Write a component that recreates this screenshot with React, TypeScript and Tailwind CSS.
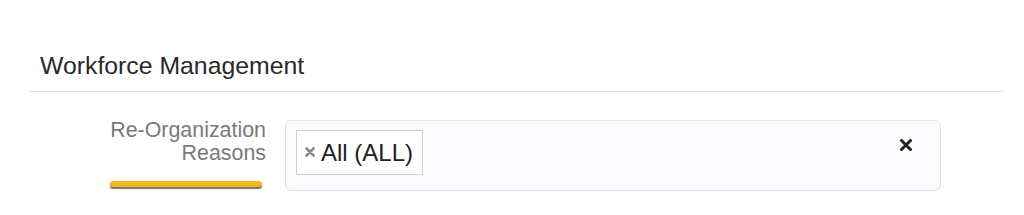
import React from "react";

export default function App() {
  return (
    <div className="w-[1024px] h-[215px] bg-white overflow-hidden" style={{ fontFamily: '"Liberation Sans", Arial, sans-serif' }}>
      <div className="ml-[30px] mr-[20px] border-b border-[#dedede] pl-[10px] pt-[52px] pb-[11px]">
        <h2 className="text-[24.8px] leading-[28px] text-[#2a2a2a] font-normal">Workforce Management</h2>
      </div>
      <div className="flex mt-[27px] ml-[30px]">
        <div className="w-[236px] flex flex-col items-end">
          <div className="text-right text-[21.4px] leading-[23px] text-[#7a7a7a]">
            Re-Organization
            <br />
            Reasons
          </div>
          <div className="mt-[16px] mr-[4px] w-[152px] h-[6px] rounded-full bg-[#f2b81c] shadow-[0_2px_1px_rgba(60,60,60,0.7)]" />
        </div>
        <div className="ml-[19px] w-[656px] h-[71px] mt-[1px] rounded-[6px] border border-[#e4e4e8] bg-[#fbfbfd] flex items-start pl-[10px] pt-[9px] pr-[28px]">
          <div className="h-[45px] border border-[#cfcfcf] bg-white flex items-center pl-[8px] pr-[9px]">
            <svg width="10" height="10" viewBox="0 0 10 10" className="mr-[6px] mt-[-2px]">
              <path d="M1.5 1.5 L8.5 8.5 M8.5 1.5 L1.5 8.5" stroke="#888" strokeWidth="2.6" strokeLinecap="round" />
            </svg>
            <span className="text-[24px] leading-[28px] text-[#222]">All (ALL)</span>
          </div>
          <div className="flex-1" />
          <svg width="12" height="12" viewBox="0 0 12 12" className="mt-[9px]">
            <path d="M1.5 1.5 L10.5 10.5 M10.5 1.5 L1.5 10.5" stroke="#222" strokeWidth="3" strokeLinecap="round" />
          </svg>
        </div>
      </div>
    </div>
  );
}
